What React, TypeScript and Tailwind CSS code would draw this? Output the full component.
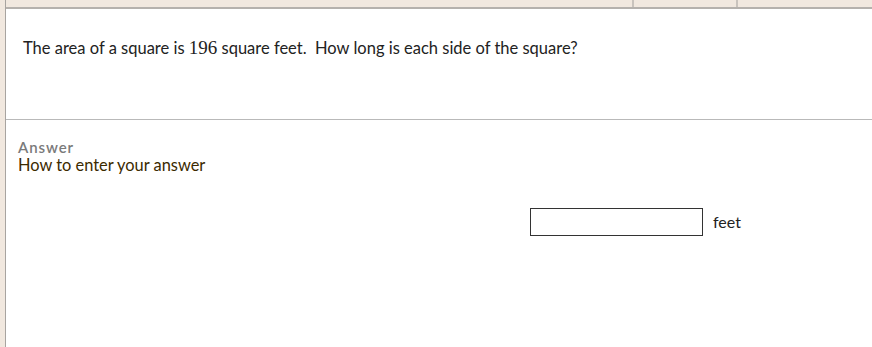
export default function App() {
  return (
    <div className="flex h-[347px] w-[872px] overflow-hidden bg-white font-['Lato',sans-serif] text-[#222]">
      <div className="w-[6px] shrink-0 border-r border-[#a8a4a0] bg-[#f1e8df]" />
      <div className="flex min-w-0 flex-1 flex-col">
        <div className="flex h-[9px] shrink-0 border-b-2 border-[#b5b1ad] bg-[#f1e8df]">
          <div className="w-[626px]" />
          <div className="w-[104px] border-l-2 border-[#c9c3bd]" />
          <div className="flex-1 border-l-2 border-[#c9c3bd]" />
        </div>
        <div className="h-[111px] shrink-0 border-b border-[#b9b9b9] px-[17px] pt-[29px]">
          <p className="text-[16.5px] leading-[20px] text-[#222]">
            The area of a square is{" "}
            <span className="font-['Liberation_Serif',serif] text-[19px]">196</span> square feet.&nbsp; How long is each
            side of the square?
          </p>
        </div>
        <div className="px-[12px] pt-[19px]">
          <div className="text-[15px] font-semibold leading-[16px] tracking-[0.9px] text-[#7a7a7a]">Answer</div>
          <div className="text-[16.4px] leading-[20px] text-[#3b2a00]">How to enter your answer</div>
          <div className="mt-[33px] flex items-center pl-[512px]">
            <input className="h-[28px] w-[173px] border border-[#333] bg-white outline-none" />
            <span className="ml-[10px] text-[16px] text-[#222]">feet</span>
          </div>
        </div>
      </div>
    </div>
  );
}
